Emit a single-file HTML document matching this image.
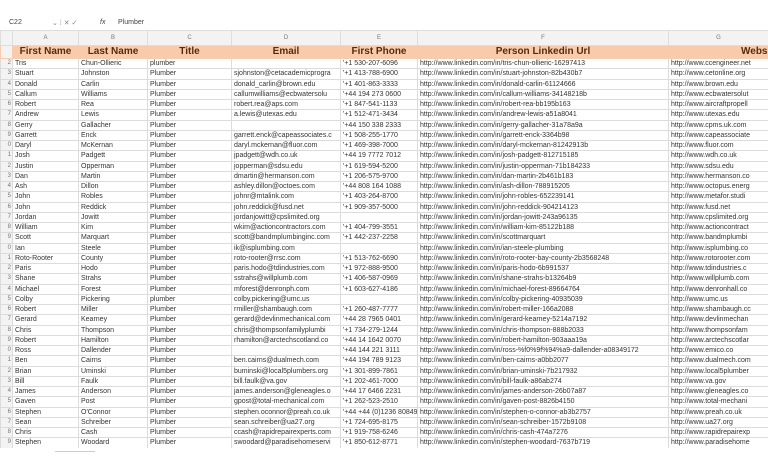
<!DOCTYPE html>
<html><head><meta charset="utf-8"><style>
*{margin:0;padding:0;box-sizing:border-box}
body{width:768px;height:462px;background:#fff;font-family:"Liberation Sans",sans-serif;position:relative;overflow:hidden;color:#333}
#fb{position:absolute;top:17px;left:0;width:768px;height:12px;font-size:7px;color:#444}
#fb span{position:absolute;top:2px}
table{position:absolute;left:0;top:30px;border-collapse:collapse;table-layout:fixed;width:768px}
td{border:1px solid #dcdcdc;white-space:nowrap;overflow:hidden;font-size:7px;height:10.26px;line-height:9px;padding:0 2px;color:#333}
tr.col td{height:15px;background:#f3f3f3;color:#777;font-size:6px;text-align:center;border-color:#ddd}
tr.hd td{height:13px;background:#f8cbad;color:#5a2a0c;font-weight:bold;font-size:10px;text-align:center;border-color:#f8cbad;line-height:12px}
td.n{background:#f3f3f3;color:#777;font-size:6px;text-align:right;padding:0 1px}
#tabs{position:absolute;top:448px;left:0;width:768px;height:14px;background:#fff}
</style></head><body>
<div id="fb"><span style="left:9px">C22</span><span style="left:52px;color:#888">⌄ ⁞ ✕ ✓</span><span style="left:100px;font-style:italic">fx</span><span style="left:118px">Plumber</span></div>
<table>
<colgroup><col style="width:12px"><col style="width:66px"><col style="width:69px"><col style="width:84px"><col style="width:109px"><col style="width:77px"><col style="width:251px"><col style="width:100px"></colgroup>
<tr class="col"><td class="n"></td><td>A</td><td>B</td><td>C</td><td>D</td><td>E</td><td>F</td><td>G</td></tr>
<tr class="hd"><td class="n" style="background:#f3f3f3"></td><td>First Name</td><td>Last Name</td><td>Title</td><td>Email</td><td>First Phone</td><td>Person Linkedin Url</td><td style="text-align:left;padding-left:72px">Website</td></tr>
<tr><td class="n">2</td><td>Tris</td><td>Chun-Ollieric</td><td>plumber</td><td></td><td>'+1 530-207-6096</td><td>http://www.linkedin.com/in/tris-chun-ollieric-16297413</td><td>http://www.ccengineer.net</td></tr>
<tr><td class="n">3</td><td>Stuart</td><td>Johnston</td><td>Plumber</td><td>sjohnston@cetacademicprogra</td><td>'+1 413-788-6900</td><td>http://www.linkedin.com/in/stuart-johnston-82b430b7</td><td>http://www.cetonline.org</td></tr>
<tr><td class="n">4</td><td>Donald</td><td>Carlin</td><td>Plumber</td><td>donald_carlin@brown.edu</td><td>'+1 401-863-3333</td><td>http://www.linkedin.com/in/donald-carlin-61124666</td><td>http://www.brown.edu</td></tr>
<tr><td class="n">5</td><td>Callum</td><td>Williams</td><td>Plumber</td><td>callumwilliams@ecbwatersolu</td><td>'+44 194 273 0600</td><td>http://www.linkedin.com/in/callum-williams-34148218b</td><td>http://www.ecbwatersolut</td></tr>
<tr><td class="n">6</td><td>Robert</td><td>Rea</td><td>Plumber</td><td>robert.rea@aps.com</td><td>'+1 847-541-1133</td><td>http://www.linkedin.com/in/robert-rea-bb195b163</td><td>http://www.aircraftpropell</td></tr>
<tr><td class="n">7</td><td>Andrew</td><td>Lewis</td><td>Plumber</td><td>a.lewis@utexas.edu</td><td>'+1 512-471-3434</td><td>http://www.linkedin.com/in/andrew-lewis-a51a8041</td><td>http://www.utexas.edu</td></tr>
<tr><td class="n">8</td><td>Gerry</td><td>Gallacher</td><td>Plumber</td><td></td><td>'+44 150 338 2333</td><td>http://www.linkedin.com/in/gerry-gallacher-31a78a9a</td><td>http://www.cpms.uk.com</td></tr>
<tr><td class="n">9</td><td>Garrett</td><td>Enck</td><td>Plumber</td><td>garrett.enck@capeassociates.c</td><td>'+1 508-255-1770</td><td>http://www.linkedin.com/in/garrett-enck-3364b98</td><td>http://www.capeassociate</td></tr>
<tr><td class="n">0</td><td>Daryl</td><td>McKernan</td><td>Plumber</td><td>daryl.mckernan@fluor.com</td><td>'+1 469-398-7000</td><td>http://www.linkedin.com/in/daryl-mckernan-81242913b</td><td>http://www.fluor.com</td></tr>
<tr><td class="n">1</td><td>Josh</td><td>Padgett</td><td>Plumber</td><td>jpadgett@wdh.co.uk</td><td>'+44 19 7772 7012</td><td>http://www.linkedin.com/in/josh-padgett-812715185</td><td>http://www.wdh.co.uk</td></tr>
<tr><td class="n">2</td><td>Justin</td><td>Opperman</td><td>Plumber</td><td>jopperman@sdsu.edu</td><td>'+1 619-594-5200</td><td>http://www.linkedin.com/in/justin-opperman-71b184233</td><td>http://www.sdsu.edu</td></tr>
<tr><td class="n">3</td><td>Dan</td><td>Martin</td><td>Plumber</td><td>dmartin@hermanson.com</td><td>'+1 206-575-9700</td><td>http://www.linkedin.com/in/dan-martin-2b461b183</td><td>http://www.hermanson.co</td></tr>
<tr><td class="n">4</td><td>Ash</td><td>Dillon</td><td>Plumber</td><td>ashley.dillon@octoes.com</td><td>'+44 808 164 1088</td><td>http://www.linkedin.com/in/ash-dillon-788915205</td><td>http://www.octopus.energ</td></tr>
<tr><td class="n">5</td><td>John</td><td>Robles</td><td>Plumber</td><td>johnr@mtalink.com</td><td>'+1 403-264-8700</td><td>http://www.linkedin.com/in/john-robles-652239141</td><td>http://www.metafor.studi</td></tr>
<tr><td class="n">6</td><td>John</td><td>Reddick</td><td>Plumber</td><td>john.reddick@fusd.net</td><td>'+1 909-357-5000</td><td>http://www.linkedin.com/in/john-reddick-904214123</td><td>http://www.fusd.net</td></tr>
<tr><td class="n">7</td><td>Jordan</td><td>Jowitt</td><td>Plumber</td><td>jordanjowitt@cpslimited.org</td><td></td><td>http://www.linkedin.com/in/jordan-jowitt-243a96135</td><td>http://www.cpslimited.org</td></tr>
<tr><td class="n">8</td><td>William</td><td>Kim</td><td>Plumber</td><td>wkim@actioncontractors.com</td><td>'+1 404-799-3551</td><td>http://www.linkedin.com/in/william-kim-85122b188</td><td>http://www.actioncontract</td></tr>
<tr><td class="n">9</td><td>Scott</td><td>Marquart</td><td>Plumber</td><td>scott@bandmplumbinginc.com</td><td>'+1 442-237-2258</td><td>http://www.linkedin.com/in/scottmarquart</td><td>http://www.bandmplumbi</td></tr>
<tr><td class="n">0</td><td>Ian</td><td>Steele</td><td>Plumber</td><td>ik@isplumbing.com</td><td></td><td>http://www.linkedin.com/in/ian-steele-plumbing</td><td>http://www.isplumbing.co</td></tr>
<tr><td class="n">1</td><td>Roto-Rooter</td><td>County</td><td>Plumber</td><td>roto-rooter@rrsc.com</td><td>'+1 513-762-6690</td><td>http://www.linkedin.com/in/roto-rooter-bay-county-2b3568248</td><td>http://www.rotorooter.com</td></tr>
<tr><td class="n">2</td><td>Paris</td><td>Hodo</td><td>Plumber</td><td>paris.hodo@tdindustries.com</td><td>'+1 972-888-9500</td><td>http://www.linkedin.com/in/paris-hodo-6b991537</td><td>http://www.tdindustries.c</td></tr>
<tr><td class="n">3</td><td>Shane</td><td>Strahs</td><td>Plumber</td><td>sstrahs@willplumb.com</td><td>'+1 406-587-0969</td><td>http://www.linkedin.com/in/shane-strahs-b13264b9</td><td>http://www.willplumb.com</td></tr>
<tr><td class="n">4</td><td>Michael</td><td>Forest</td><td>Plumber</td><td>mforest@denronph.com</td><td>'+1 603-627-4186</td><td>http://www.linkedin.com/in/michael-forest-89664764</td><td>http://www.denronhall.co</td></tr>
<tr><td class="n">5</td><td>Colby</td><td>Pickering</td><td>plumber</td><td>colby.pickering@umc.us</td><td></td><td>http://www.linkedin.com/in/colby-pickering-40935039</td><td>http://www.umc.us</td></tr>
<tr><td class="n">6</td><td>Robert</td><td>Miller</td><td>Plumber</td><td>rmiller@shambaugh.com</td><td>'+1 260-487-7777</td><td>http://www.linkedin.com/in/robert-miller-166a2088</td><td>http://www.shambaugh.cc</td></tr>
<tr><td class="n">7</td><td>Gerard</td><td>Kearney</td><td>Plumber</td><td>gerard@devlinmechanical.com</td><td>'+44 28 7965 0401</td><td>http://www.linkedin.com/in/gerard-kearney-5214a7192</td><td>http://www.devlinmechan</td></tr>
<tr><td class="n">8</td><td>Chris</td><td>Thompson</td><td>Plumber</td><td>chris@thompsonfamilyplumbi</td><td>'+1 734-279-1244</td><td>http://www.linkedin.com/in/chris-thompson-888b2033</td><td>http://www.thompsonfam</td></tr>
<tr><td class="n">9</td><td>Robert</td><td>Hamilton</td><td>Plumber</td><td>rhamilton@arctechscotland.co</td><td>'+44 14 1642 0070</td><td>http://www.linkedin.com/in/robert-hamilton-903aaa19a</td><td>http://www.arctechscotlar</td></tr>
<tr><td class="n">0</td><td>Ross</td><td>Dallender</td><td>Plumber</td><td></td><td>'+44 144 221 3111</td><td>http://www.linkedin.com/in/ross-%f0%9f%94%a9-dallender-a08349172</td><td>http://www.emico.co</td></tr>
<tr><td class="n">1</td><td>Ben</td><td>Cairns</td><td>Plumber</td><td>ben.cairns@dualmech.com</td><td>'+44 194 789 9123</td><td>http://www.linkedin.com/in/ben-cairns-a0bb2077</td><td>http://www.dualmech.com</td></tr>
<tr><td class="n">2</td><td>Brian</td><td>Uminski</td><td>Plumber</td><td>buminski@local5plumbers.org</td><td>'+1 301-899-7861</td><td>http://www.linkedin.com/in/brian-uminski-7b217932</td><td>http://www.local5plumber</td></tr>
<tr><td class="n">3</td><td>Bill</td><td>Faulk</td><td>Plumber</td><td>bill.faulk@va.gov</td><td>'+1 202-461-7000</td><td>http://www.linkedin.com/in/bill-faulk-a86ab274</td><td>http://www.va.gov</td></tr>
<tr><td class="n">4</td><td>James</td><td>Anderson</td><td>Plumber</td><td>james.anderson@gleneagles.o</td><td>'+44 17 6466 2231</td><td>http://www.linkedin.com/in/james-anderson-26b07a87</td><td>http://www.gleneagles.co</td></tr>
<tr><td class="n">5</td><td>Gaven</td><td>Post</td><td>Plumber</td><td>gpost@total-mechanical.com</td><td>'+1 262-523-2510</td><td>http://www.linkedin.com/in/gaven-post-8826b4150</td><td>http://www.total-mechani</td></tr>
<tr><td class="n">6</td><td>Stephen</td><td>O'Connor</td><td>Plumber</td><td>stephen.oconnor@preah.co.uk</td><td>'+44 +44 (0)1236 808499</td><td>http://www.linkedin.com/in/stephen-o-connor-ab3b2757</td><td>http://www.preah.co.uk</td></tr>
<tr><td class="n">7</td><td>Sean</td><td>Schreiber</td><td>Plumber</td><td>sean.schreiber@ua27.org</td><td>'+1 724-695-8175</td><td>http://www.linkedin.com/in/sean-schreiber-1572b9108</td><td>http://www.ua27.org</td></tr>
<tr><td class="n">8</td><td>Chris</td><td>Cash</td><td>Plumber</td><td>ccash@rapidrepairexperts.com</td><td>'+1 919-758-6246</td><td>http://www.linkedin.com/in/chris-cash-474a7276</td><td>http://www.rapidrepairexp</td></tr>
<tr><td class="n">9</td><td>Stephen</td><td>Woodard</td><td>Plumber</td><td>swoodard@paradisehomeservi</td><td>'+1 850-612-8771</td><td>http://www.linkedin.com/in/stephen-woodard-7637b719</td><td>http://www.paradisehome</td></tr>
</table>
<div id="tabs"><div style="position:absolute;left:55px;top:0;width:40px;height:4px;border-bottom:1px solid #ccc"></div></div>
</body></html>
